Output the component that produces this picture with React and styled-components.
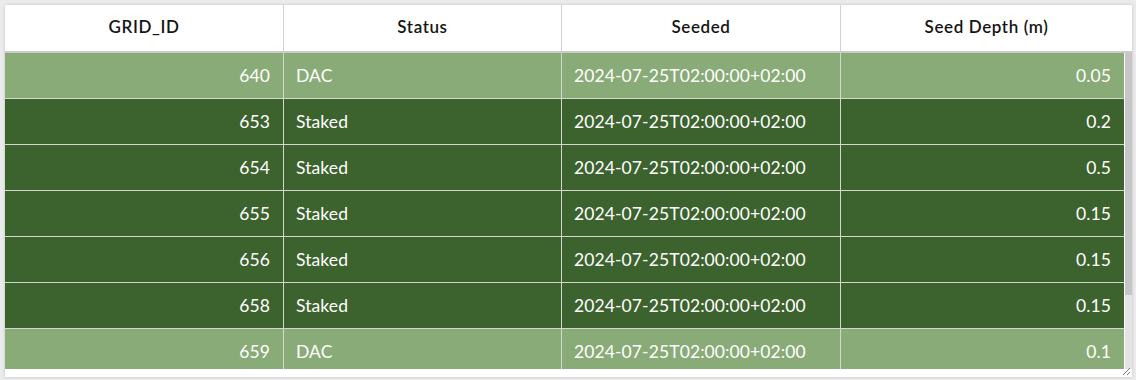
import styled, { createGlobalStyle } from 'styled-components'

const GlobalStyle = createGlobalStyle`
  html, body {
    margin: 0;
    padding: 0;
    background: #ebebeb;
  }
  body {
    font-family: "Lato", "Open Sans", sans-serif;
  }
`

const Page = styled.div`
  padding: 5px 4px 3px 5px;
  width: 1136px;
  height: 380px;
  box-sizing: border-box;
`

const TableCard = styled.div`
  position: relative;
  background: #ffffff;
  height: 372px;
  box-shadow: 0 0 3px rgba(0, 0, 0, 0.18);
  display: flex;
  flex-direction: column;
`

const cols = '278px 278px 279px 1fr'

const HeaderRow = styled.div`
  display: grid;
  grid-template-columns: ${cols};
  height: 46px;
  border-bottom: 2px solid #cbcbcb;
`

const HeaderCell = styled.div`
  display: flex;
  align-items: center;
  justify-content: center;
  padding-bottom: 4px;
  font-size: 17px;
  font-weight: 600;
  letter-spacing: 0.6px;
  color: #151515;
  border-left: ${p => (p.$first ? 'none' : '1px solid #d2d2d2')};
`

const Body = styled.div`
  display: flex;
  height: 316px;
`

const RowList = styled.div`
  flex: 1;
  overflow: hidden;
`

const ScrollTrack = styled.div`
  width: 7px;
  margin-left: 1px;
  background: #e3e3e3;
`

const ScrollThumb = styled.div`
  height: ${p => p.$size}px;
  background: #c6c6c6;
`

const Row = styled.div`
  display: grid;
  grid-template-columns: ${cols};
  height: 46px;
  box-sizing: border-box;
  border-bottom: 1px solid #d3d8cf;
  background: ${p => (p.$light ? '#89ab77' : '#3c622e')};
`

const Cell = styled.div`
  display: flex;
  align-items: center;
  justify-content: ${p => (p.$right ? 'flex-end' : 'flex-start')};
  padding: 0 13px 0 12px;
  font-size: 17.5px;
  letter-spacing: 0.1px;
  color: #ffffff;
  border-left: ${p => (p.$first ? 'none' : '1px solid #d3d8cf')};
  white-space: nowrap;
`

const Grip = styled.svg`
  position: absolute;
  right: 1px;
  bottom: 1px;
`

const rows = [
  ['640', 'DAC', '0.05'],
  ['653', 'Staked', '0.2'],
  ['654', 'Staked', '0.5'],
  ['655', 'Staked', '0.15'],
  ['656', 'Staked', '0.15'],
  ['658', 'Staked', '0.15'],
  ['659', 'DAC', '0.1'],
  ['660', 'Staked', '0.2'],
  ['661', 'Staked', '0.15'],
]

const App = () => {
  return (
    <Page>
      <GlobalStyle />
      <TableCard>
        <HeaderRow>
          <HeaderCell $first>GRID_ID</HeaderCell>
          <HeaderCell>Status</HeaderCell>
          <HeaderCell>Seeded</HeaderCell>
          <HeaderCell>Seed Depth (m)</HeaderCell>
        </HeaderRow>
        <Body>
          <RowList>
            {rows.map(([id, status, depth]) => (
              <Row key={id} $light={status === 'DAC'}>
                <Cell $first $right>{id}</Cell>
                <Cell>{status}</Cell>
                <Cell>2024-07-25T02:00:00+02:00</Cell>
                <Cell $right>{depth}</Cell>
              </Row>
            ))}
          </RowList>
          <ScrollTrack>
            <ScrollThumb $size={242} />
          </ScrollTrack>
        </Body>
        <Grip width="10" height="10" viewBox="0 0 10 10">
          <path d="M9 2 L2 9 M9 6 L6 9" stroke="#777" strokeWidth="1" />
        </Grip>
      </TableCard>
    </Page>
  )
}

export default App
